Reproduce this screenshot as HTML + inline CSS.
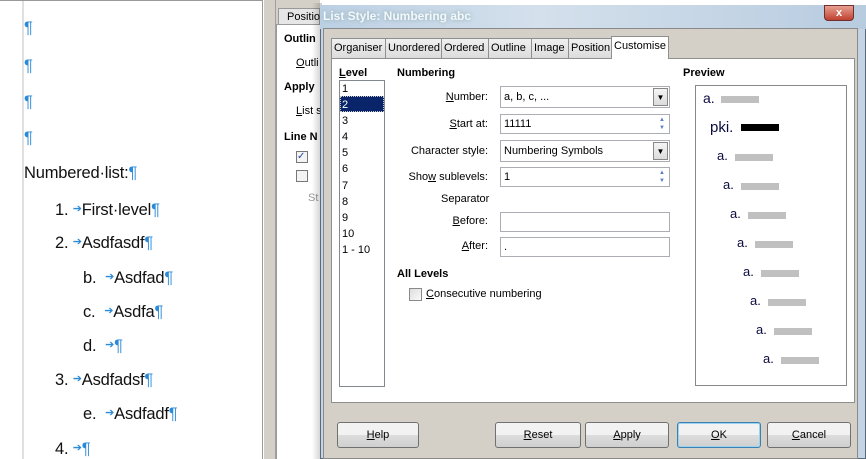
<!DOCTYPE html>
<html><head><meta charset="utf-8"><style>
*{margin:0;padding:0;box-sizing:border-box}
body{width:866px;height:459px;overflow:hidden;position:relative;background:#fff;font-family:"Liberation Sans",sans-serif;font-size:11px;color:#000}
.a{position:absolute;white-space:nowrap}
.doc{font-size:16.5px;color:#111;letter-spacing:-0.2px}
.p{color:#2a8ad8}
.ar{color:#2a8ad8;font-size:11px;vertical-align:3px}
.lbl{position:absolute;right:378px;white-space:nowrap}
.fld{position:absolute;left:500px;width:170px;background:#fff;border:1px solid #abadb3;padding:3px 0 0 3px}
.dd{position:absolute;right:1px;top:1px;bottom:1px;width:15px;background:linear-gradient(#f4f4f4,#dcdcdc);border:1px solid #888;font-size:8px;text-align:center;line-height:18px}
.sp{position:absolute;right:1px;top:1px;width:12px;bottom:1px;font-size:6px;color:#5a7ec8;text-align:center;line-height:8px}
.btn{position:absolute;top:422px;height:26px;border:1px solid #707070;border-radius:3px;background:linear-gradient(#f2f2f2 50%,#dddddd 50%,#cfcfcf);text-align:center;line-height:24px;font-size:11px}
.tab{position:absolute;top:38px;height:20px;background:linear-gradient(#f0f0f0,#dcdcdc);border:1px solid #8e8f8f;border-bottom:none;padding:3px 0 0 2px;font-size:11px}
.pv{position:absolute;font-size:13px;color:#0a0a40}
.bar{position:absolute;height:7px;width:38px;background:#c0c0c0}
u{text-decoration:underline}
</style></head><body>
<div class="a" style="left:0;top:0;width:263px;height:459px;background:#fff;border-right:1px solid #9a9a9a"></div>
<div class="a" style="left:22px;top:0;width:2px;height:459px;background:#e0e0e0"></div>
<div class="a" style="left:0;top:0;width:263px;height:1px;background:#999"></div>
<div class="a doc p" style="left:24px;top:19px">¶</div>
<div class="a doc p" style="left:24px;top:57px">¶</div>
<div class="a doc p" style="left:24px;top:93px">¶</div>
<div class="a doc p" style="left:24px;top:129px">¶</div>
<div class="a doc" style="left:24px;top:164px">Numbered·list:<span class="p">¶</span></div>
<div class="a doc" style="left:55px;top:201px">1. <span class="ar">➔</span>First·level<span class="p">¶</span></div>
<div class="a doc" style="left:55px;top:234px">2. <span class="ar">➔</span>Asdfasdf<span class="p">¶</span></div>
<div class="a doc" style="left:83px;top:269px">b.&nbsp; <span class="ar">➔</span>Asdfad<span class="p">¶</span></div>
<div class="a doc" style="left:83px;top:303px">c.&nbsp; <span class="ar">➔</span>Asdfa<span class="p">¶</span></div>
<div class="a doc" style="left:83px;top:337px">d.&nbsp; <span class="ar">➔</span><span class="p">¶</span></div>
<div class="a doc" style="left:55px;top:371px">3. <span class="ar">➔</span>Asdfadsf<span class="p">¶</span></div>
<div class="a doc" style="left:83px;top:405px">e.&nbsp; <span class="ar">➔</span>Asdfadf<span class="p">¶</span></div>
<div class="a doc" style="left:55px;top:440px">4. <span class="ar">➔</span><span class="p">¶</span></div>
<div class="a" style="left:264px;top:0;width:12px;height:459px;background:#d4d0c8;border-right:1px solid #a0a0a0"></div>
<div class="a" style="left:276px;top:0;width:44px;height:459px;background:#d4d0c8"></div>
<div class="a" style="left:278px;top:8px;width:42px;height:17px;border:1px solid #999;border-bottom:none;background:#e6e6e6;padding:2px 0 0 8px">Positio</div>
<div class="a" style="left:276px;top:24px;width:44px;height:435px;background:#fff;border-left:1px solid #999;border-top:1px solid #999"></div>
<div class="a" style="left:284px;top:33px;font-weight:bold">Outlin</div>
<div class="a" style="left:296px;top:57px"><u>O</u>utli</div>
<div class="a" style="left:284px;top:81px;font-weight:bold">Apply</div>
<div class="a" style="left:296px;top:105px"><u>L</u>ist s</div>
<div class="a" style="left:284px;top:131px;font-weight:bold">Line N</div>
<div class="a" style="left:296px;top:151px;width:12px;height:12px;border:1px solid #777;background:#f4f4f4;font-size:10px;line-height:10px;color:#2048a0">✓</div>
<div class="a" style="left:296px;top:170px;width:12px;height:12px;border:1px solid #777;background:#f4f4f4"></div>
<div class="a" style="left:308px;top:192px;color:#999">St</div>
<div class="a" style="left:312px;top:3px;width:10px;height:456px;background:linear-gradient(90deg,rgba(0,0,0,0),rgba(0,0,0,.2))"></div>
<div class="a" style="left:320px;top:5px;width:546px;height:454px;background:#c4d4e4;border:1px solid #5a6a7a"></div>
<div class="a" style="left:320px;top:5px;width:546px;height:24px;background:linear-gradient(90deg,#bcd0e4,#d4e0ec 40%,#b8cce0)"></div>
<div class="a" style="left:323px;top:9px;font-weight:bold;color:#f4f8fc;font-size:12px;text-shadow:0 0 4px #8aa">List Style: Numbering abc</div>
<div class="a" style="left:824px;top:5px;width:30px;height:16px;background:linear-gradient(#e8a090,#c04030);border:1px solid #703030;border-radius:0 0 4px 4px;color:#fff;text-align:center;font-weight:bold;line-height:14px">x</div>
<div class="a" style="left:323px;top:28px;width:535px;height:431px;background:#d4d0c8;border:1px solid #8a8a8a"></div>
<div class="tab" style="left:331px;width:55px">Organiser</div>
<div class="tab" style="left:385px;width:57px">Unordered</div>
<div class="tab" style="left:441px;width:48px">Ordered</div>
<div class="tab" style="left:488px;width:44px">Outline</div>
<div class="tab" style="left:531px;width:38px">Image</div>
<div class="tab" style="left:568px;width:44px">Position</div>
<div class="a" style="left:331px;top:58px;width:524px;height:345px;background:#fff;border:1px solid #8e8f8f"></div>
<div class="a" style="left:611px;top:36px;width:58px;height:23px;background:#fff;border:1px solid #8e8f8f;border-bottom:none;padding:3px 0 0 2px">Customise</div>
<div class="a" style="left:339px;top:67px;font-weight:bold"><u>L</u>evel</div>
<div class="a" style="left:339px;top:80px;width:46px;height:307px;border:1px solid #828790;background:#fff"></div>
<div class="a" style="left:340px;top:96px;width:44px;height:16px;background:#0a246a;outline:1px dotted #ccc;outline-offset:-1px"></div>
<div class="a" style="left:342px;top:81px;line-height:16.1px">1<br><span style="color:#fff">2</span><br>3<br>4<br>5<br>6<br>7<br>8<br>9<br>10<br>1 - 10</div>
<div class="a" style="left:397px;top:67px;font-weight:bold">Numbering</div>
<div class="lbl" style="top:91px"><u>N</u>umber:</div>
<div class="fld" style="top:86px;height:22px;padding-top:4px">a, b, c, ...<div class="dd">▼</div></div>
<div class="lbl" style="top:118px"><u>S</u>tart at:</div>
<div class="fld" style="top:114px;height:20px">11111<div class="sp">▲<br>▼</div></div>
<div class="lbl" style="top:145px">Character style:</div>
<div class="fld" style="top:140px;height:22px;padding-top:4px">Numbering Symbols<div class="dd">▼</div></div>
<div class="lbl" style="top:171px">Sho<u>w</u> sublevels:</div>
<div class="fld" style="top:167px;height:20px">1<div class="sp">▲<br>▼</div></div>
<div class="a" style="left:441px;top:193px">Separator</div>
<div class="lbl" style="top:215px"><u>B</u>efore:</div>
<div class="fld" style="top:212px;height:20px"></div>
<div class="lbl" style="top:240px"><u>A</u>fter:</div>
<div class="fld" style="top:237px;height:20px">.</div>
<div class="a" style="left:397px;top:268px;font-weight:bold">All Levels</div>
<div class="a" style="left:409px;top:288px;width:13px;height:13px;border:1px solid #8a8a8a;background:linear-gradient(135deg,#ddd,#fafafa)"></div>
<div class="a" style="left:426px;top:288px"><u>C</u>onsecutive numbering</div>
<div class="a" style="left:683px;top:67px;font-weight:bold">Preview</div>
<div class="a" style="left:695px;top:85px;width:152px;height:301px;border:1px solid #888;background:#fff"></div>
<div class="pv" style="left:703px;top:90px;font-size:14px">a.</div><div class="bar" style="left:721px;top:96px"></div>
<div class="pv" style="left:710px;top:119px;font-size:15px">pki.</div><div class="bar" style="left:741px;top:124px;background:#000"></div>
<div class="pv" style="left:717px;top:148px">a.</div><div class="bar" style="left:735px;top:154px"></div>
<div class="pv" style="left:723px;top:177px">a.</div><div class="bar" style="left:741px;top:183px"></div>
<div class="pv" style="left:730px;top:206px">a.</div><div class="bar" style="left:748px;top:212px"></div>
<div class="pv" style="left:737px;top:235px">a.</div><div class="bar" style="left:755px;top:241px"></div>
<div class="pv" style="left:743px;top:264px">a.</div><div class="bar" style="left:761px;top:270px"></div>
<div class="pv" style="left:750px;top:293px">a.</div><div class="bar" style="left:768px;top:299px"></div>
<div class="pv" style="left:756px;top:322px">a.</div><div class="bar" style="left:774px;top:328px"></div>
<div class="pv" style="left:763px;top:351px">a.</div><div class="bar" style="left:781px;top:357px"></div>
<div class="btn" style="left:337px;width:82px"><u>H</u>elp</div>
<div class="btn" style="left:495px;width:86px"><u>R</u>eset</div>
<div class="btn" style="left:585px;width:84px"><u>A</u>pply</div>
<div class="btn" style="left:677px;width:84px;border-color:#3c7fb1;box-shadow:inset 0 0 0 1px #9ad2f0"><u>O</u>K</div>
<div class="btn" style="left:767px;width:84px"><u>C</u>ancel</div>
</body></html>
